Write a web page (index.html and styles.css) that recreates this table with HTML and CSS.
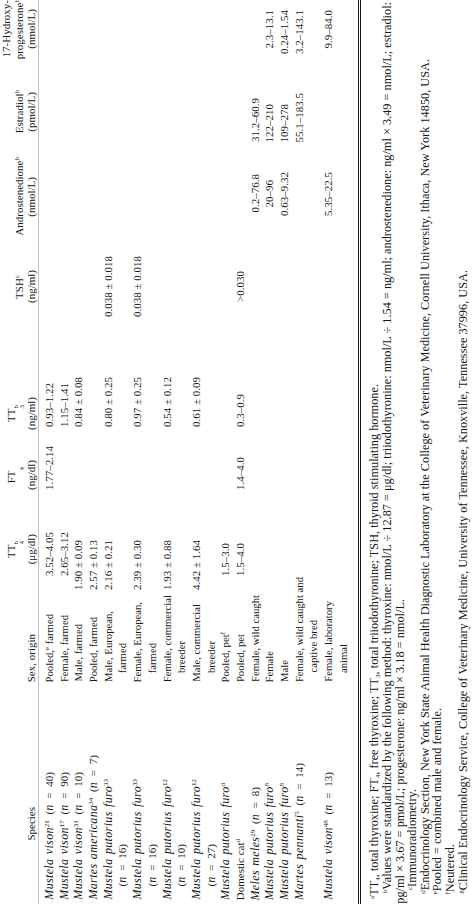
FILE: index.html
```html
<!DOCTYPE html>
<html>
<head>
<meta charset="utf-8">
<link rel="stylesheet" href="styles.css">
</head>
<body>
<div class="page">
  <div class="tbl">
    <div class="row head">
      <div class="h sp-h">Species</div>
      <div class="h sx-h">Sex, origin</div>
      <div class="h t4-h"><span>TT<span class="ss"><sup>b</sup><sub>4</sub></span></span><span>(μg/dl)</span></div>
      <div class="h f4-h"><span>FT<span class="ss"><sup>&nbsp;</sup><sub>4</sub></span></span><span>(ng/dl)</span></div>
      <div class="h t3-h"><span>TT<span class="ss"><sup>b</sup><sub>3</sub></span></span><span>(ng/ml)</span></div>
      <div class="h tsh-h"><span>TSH<sup class="s">c</sup></span><span>(ng/ml)</span></div>
      <div class="h an-h"><span>Androstenedione<sup class="s">b</sup></span><span>(nmol/L)</span></div>
      <div class="h es-h"><span>Estradiol<sup class="s">b</sup></span><span>(pmol/L)</span></div>
      <div class="h hp-h"><span>17-Hydroxy-</span><span>progesterone<sup class="s">b</sup></span><span>(nmol/L)</span></div>
    </div>
    <div class="body">
      <div class="row"><div class="sp"><i>Mustela vison</i><sup class="s">21</sup> (<i>n</i> = 40)</div><div class="sx">Pooled,<sup class="s">e</sup> farmed</div><div class="t4 rg">3.52–4.05</div><div class="f4">1.77–2.14</div><div class="t3">0.93–1.22</div></div>
      <div class="row"><div class="sp"><i>Mustela vison</i><sup class="s">17</sup> (<i>n</i> = 90)</div><div class="sx">Female, farmed</div><div class="t4 rg">2.65–3.12</div><div class="t3">1.15–1.41</div></div>
      <div class="row"><div class="sp"><i>Mustela vison</i><sup class="s">31</sup> (<i>n</i> = 10)</div><div class="sx">Male, farmed</div><div class="t4">1.90 ± 0.09</div><div class="t3">0.84 ± 0.08</div></div>
      <div class="row"><div class="sp"><i>Martes americana</i><sup class="s">34</sup> (<i>n</i> = 7)</div><div class="sx">Pooled, farmed</div><div class="t4">2.57 ± 0.13</div></div>
      <div class="row"><div class="sp"><i>Mustela putorius furo</i><sup class="s">33</sup></div><div class="sx">Male, European,</div><div class="t4">2.16 ± 0.21</div><div class="t3">0.80 ± 0.25</div><div class="tsh">0.038 ± 0.018</div></div>
      <div class="row"><div class="sp ind">(<i>n</i> = 16)</div><div class="sx ind">farmed</div></div>
      <div class="row"><div class="sp"><i>Mustela putorius furo</i><sup class="s">33</sup></div><div class="sx">Female, European,</div><div class="t4">2.39 ± 0.30</div><div class="t3">0.97 ± 0.25</div><div class="tsh">0.038 ± 0.018</div></div>
      <div class="row"><div class="sp ind">(<i>n</i> = 16)</div><div class="sx ind">farmed</div></div>
      <div class="row"><div class="sp"><i>Mustela putorius furo</i><sup class="s">12</sup></div><div class="sx">Female, commercial</div><div class="t4">1.93 ± 0.88</div><div class="t3">0.54 ± 0.12</div></div>
      <div class="row"><div class="sp ind">(<i>n</i> = 10)</div><div class="sx ind">breeder</div></div>
      <div class="row"><div class="sp"><i>Mustela putorius furo</i><sup class="s">12</sup></div><div class="sx">Male, commercial</div><div class="t4">4.42 ± 1.64</div><div class="t3">0.61 ± 0.09</div></div>
      <div class="row"><div class="sp ind">(<i>n</i> = 27)</div><div class="sx ind">breeder</div></div>
      <div class="row"><div class="sp"><i>Mustela putorius furo</i><sup class="s">d</sup></div><div class="sx">Pooled, pet<sup class="s">f</sup></div><div class="t4 rg">1.5–3.0</div></div>
      <div class="row"><div class="sp up">Domestic cat<sup class="s">d</sup></div><div class="sx">Pooled, pet</div><div class="t4 rg">1.5–4.0</div><div class="f4">1.4–4.0</div><div class="t3">0.3–0.9</div><div class="tsh">&gt;0.030</div></div>
      <div class="row"><div class="sp"><i>Meles meles</i><sup class="s">29</sup> (<i>n</i> = 8)</div><div class="sx">Female, wild caught</div><div class="an">0.2–76.8</div><div class="es">31.2–60.9</div></div>
      <div class="row"><div class="sp"><i>Mustela putorius furo</i><sup class="s">8</sup></div><div class="sx">Female</div><div class="an">20–96</div><div class="es">122–210</div><div class="hp">2.3–13.1</div></div>
      <div class="row"><div class="sp"><i>Mustela putorius furo</i><sup class="s">8</sup></div><div class="sx">Male</div><div class="an">0.63–9.32</div><div class="es">109–278</div><div class="hp">0.24–1.54</div></div>
      <div class="row"><div class="sp"><i>Martes pennanti</i><sup class="s">5</sup> (<i>n</i> = 14)</div><div class="sx">Female, wild caught and</div><div class="es">55.1–183.5</div><div class="hp">3.2–143.1</div></div>
      <div class="row"><div class="sx ind">captive bred</div></div>
      <div class="row"><div class="sp"><i>Mustela vison</i><sup class="s">48</sup> (<i>n</i> = 13)</div><div class="sx">Female, laboratory</div><div class="an">5.35–22.5</div><div class="hp">9.9–84.0</div></div>
      <div class="row"><div class="sx ind">animal</div></div>
    </div>
  </div>
  <div class="rule"></div>
  <div class="notes">
    <div class="note na"><sup class="s">a</sup>TT<sub class="b">4</sub>, total thyroxine; FT<sub class="b">4</sub>, free thyroxine; TT<sub class="b">3</sub>, total triiodothyronine; TSH, thyroid stimulating hormone.</div>
    <div class="note nb"><sup class="s">b</sup>Values were standardized by the following method: thyroxine: nmol/L ÷ 12.87 = μg/dl; triiodothyronine: nmol/L ÷ 1.54 = ng/ml; androstenedione: ng/ml × 3.49 = nmol/L; estradiol:</div>
    <div class="note nb2">pg/ml × 3.67 = pmol/L; progesterone: ng/ml × 3.18 = nmol/L.</div>
    <div class="note nc"><sup class="s">c</sup>Immunoradiometry.</div>
    <div class="note nd"><sup class="s">d</sup>Endocrinology Section, New York State Animal Health Diagnostic Laboratory at the College of Veterinary Medicine, Cornell University, Ithaca, New York 14850, USA.</div>
    <div class="note nd"><sup class="s">e</sup>Pooled = combined male and female.</div>
    <div class="note nd"><sup class="s">f</sup>Neutered.</div>
    <div class="note nd"><sup class="s">g</sup>Clinical Endocrinology Service, College of Veterinary Medicine, University of Tennessee, Knoxville, Tennessee 37996, USA.</div>
  </div>
</div>
</body>
</html>
```
FILE: styles.css
```css
html, body {
  margin: 0;
  padding: 0;
  overflow: hidden;
  background: #ffffff;
}

.page {
  width: 474px;
  height: 904px;
  overflow: hidden;
  writing-mode: sideways-lr;
  font-family: "Liberation Serif", "Times New Roman", serif;
  color: #181818;
  font-size: 11px;
  background: #ffffff;
}

@supports not (writing-mode: sideways-lr) {
  .page {
    writing-mode: vertical-rl;
    transform: rotate(180deg);
  }
}

.row {
  display: grid;
  grid-template-columns: 218px 91px 96px 65px 100px 95px 85px 85px 69px;
  block-size: 14.7px;
  line-height: 14.7px;
  white-space: nowrap;
}

.row > div {
  min-inline-size: 0;
}

.head {
  block-size: 39px;
  line-height: 12.5px;
  border-block-end: 1px solid #c4c4c4;
  box-sizing: border-box;
}

.h {
  display: flex;
  flex-direction: column;
  justify-content: flex-end;
  align-items: center;
  padding-block-end: 3px;
}

.sp-h { padding-inline-end: 58px; }
.sx-h { align-items: flex-start; padding-inline-start: 4px; }
.t4-h { grid-column: 3; padding-inline-end: 4px; }
.f4-h { grid-column: 4; padding-inline-end: 17px; }
.t3-h { grid-column: 5; padding-inline-end: 58px; }
.tsh-h { grid-column: 6; }
.an-h { grid-column: 7; }
.es-h { grid-column: 8; }
.hp-h { grid-column: 9; padding-inline-start: 11px; }

.body {
  padding-block-start: 3px;
  padding-block-end: 8px;
}

.sp {
  grid-column: 1;
  padding-inline-start: 4px;
  word-spacing: 3px;
}
.sp i {
  font-size: 12px;
  letter-spacing: 0.35px;
  word-spacing: 1px;
}
.sp.up { word-spacing: 0; }
.sp.ind { padding-inline-start: 18px; }
.sx {
  grid-column: 2;
  padding-inline-start: 4px;
  font-size: 10.7px;
}
.sx.ind { padding-inline-start: 13px; }
.t4 { grid-column: 3; padding-inline-start: 5px; }
.t4.rg { padding-inline-start: 19px; }
.f4 { grid-column: 4; padding-inline-start: 9px; }
.t3 { grid-column: 5; padding-inline-start: 7px; }
.tsh { grid-column: 6; display: flex; justify-content: center; }
.an { grid-column: 7; display: flex; justify-content: center; padding-inline-start: 6px; }
.es { grid-column: 8; padding-inline-start: 12px; }
.hp { grid-column: 9; text-align: end; padding-inline-end: 10px; }

sup.s {
  font-size: 7px;
  line-height: 0;
  vertical-align: 4px;
  font-style: normal;
  letter-spacing: 0;
}

sub.b {
  font-size: 7px;
  line-height: 0;
  vertical-align: -2px;
}

.ss {
  display: inline-flex;
  flex-direction: column;
  font-size: 7px;
  line-height: 6px;
  vertical-align: -3px;
}

.ss sup, .ss sub {
  font-size: 7px;
  line-height: 6px;
  vertical-align: baseline;
}

.rule {
  block-size: 1px;
  border-block-start: 1.5px solid #181818;
  border-block-end: 1.5px solid #181818;
  inline-size: 904px;
}

.notes {
  padding-block-start: 7px;
  font-size: 12.3px;
  line-height: 12.6px;
  white-space: nowrap;
}

.note { block-size: 12.6px; }
.na { padding-inline-start: 5px; }
.nb { padding-inline-start: 11px; }
.nb2 { padding-inline-start: 0; }
.nc { padding-inline-start: 14px; }
.nd { padding-inline-start: 10px; }
```
